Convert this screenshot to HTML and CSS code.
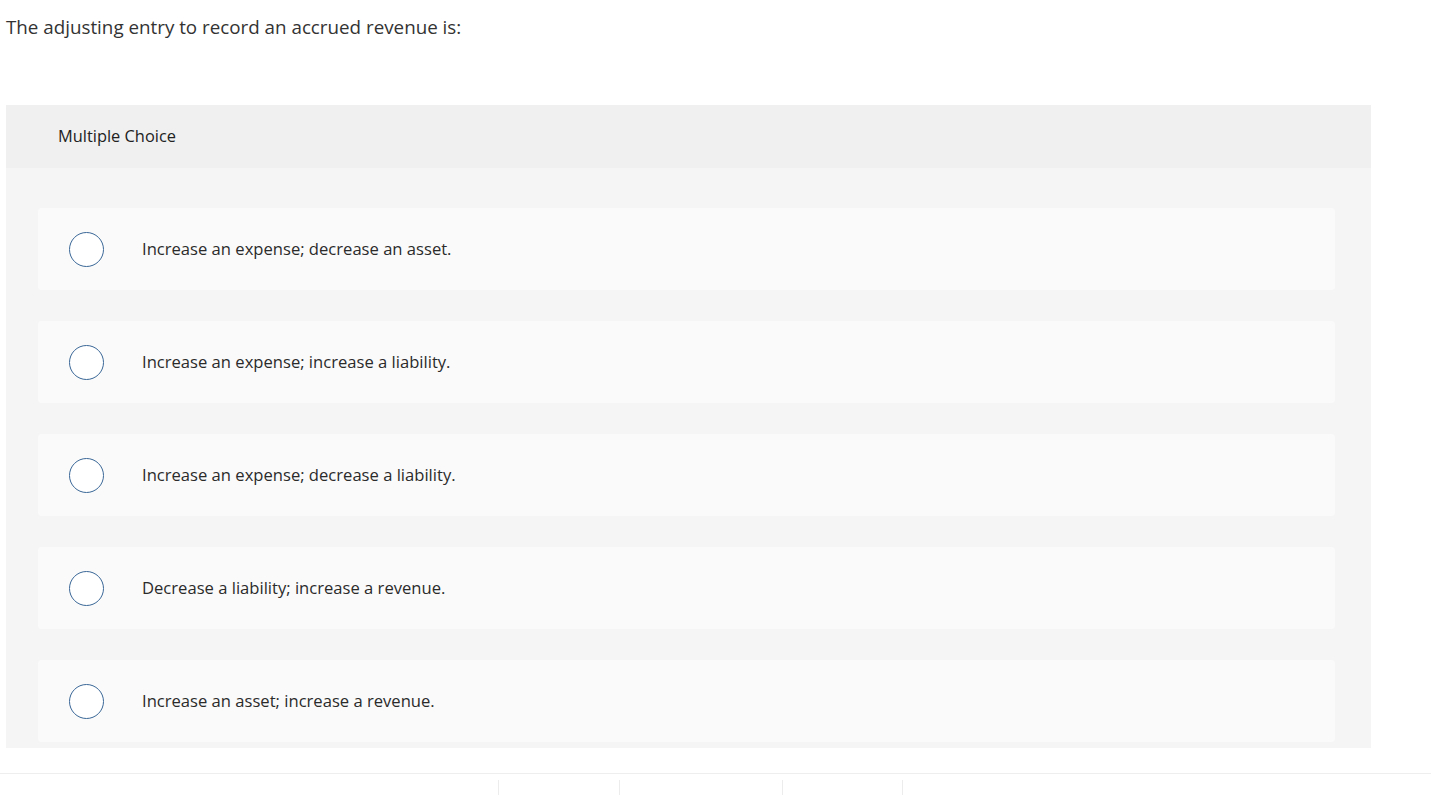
FILE: index.html
```html
<!DOCTYPE html>
<html>
<head>
<meta charset="utf-8">
<link rel="stylesheet" href="styles.css">
</head>
<body>
<div class="prompt">The adjusting entry to record an accrued revenue is:</div>
<div class="question">
  <div class="q-header">Multiple Choice</div>
  <div class="q-body">
    <div class="option"><span class="radio"></span><span class="label">Increase an expense; decrease an asset.</span></div>
    <div class="option"><span class="radio"></span><span class="label">Increase an expense; increase a liability.</span></div>
    <div class="option"><span class="radio"></span><span class="label">Increase an expense; decrease a liability.</span></div>
    <div class="option"><span class="radio"></span><span class="label">Decrease a liability; increase a revenue.</span></div>
    <div class="option"><span class="radio"></span><span class="label">Increase an asset; increase a revenue.</span></div>
  </div>
</div>
<div class="footer">
  <div class="seps">
    <span class="sep s1"></span>
    <span class="sep s2"></span>
    <span class="sep s3"></span>
    <span class="sep s4"></span>
  </div>
</div>
</body>
</html>
```
FILE: styles.css
```css
html, body {
  margin: 0;
  padding: 0;
  background: #fff;
  font-family: "Open Sans", "Lato", sans-serif;
  color: #2b2b2b;
  overflow: hidden;
}
.prompt {
  padding: 13px 0 0 6px;
  height: 105px;
  box-sizing: border-box;
  font-size: 18.8px;
  line-height: 28px;
  color: #333;
}
.question {
  margin-left: 6px;
  width: 1365px;
  background: #f5f5f5;
}
.q-header {
  height: 63px;
  box-sizing: border-box;
  background: #f0f0f0;
  padding-left: 52px;
  padding-bottom: 2px;
  display: flex;
  align-items: center;
  font-size: 16.4px;
  color: #222;
}
.q-body {
  padding: 40px 36px 6px 32px;
  display: flex;
  flex-direction: column;
  gap: 31px;
}
.option {
  height: 82px;
  background: #fafafa;
  border-radius: 4px;
  display: flex;
  align-items: center;
  padding-left: 31px;
}
.radio {
  width: 35px;
  height: 35px;
  box-sizing: border-box;
  border: 1.5px solid #3a6797;
  border-radius: 50%;
  background: #fff;
  flex: none;
}
.label {
  margin-left: 38px;
  margin-bottom: 2px;
  font-size: 16.6px;
  color: #2b2b2b;
}
.footer {
  margin-top: 25px;
  border-top: 1px solid #eeeeee;
  height: 40px;
}
.seps {
  position: relative;
  height: 40px;
}
.sep {
  position: absolute;
  top: 6px;
  width: 1px;
  height: 30px;
  background: #ececec;
}
.s1 { left: 498px; }
.s2 { left: 619px; }
.s3 { left: 782px; }
.s4 { left: 902px; }
```
